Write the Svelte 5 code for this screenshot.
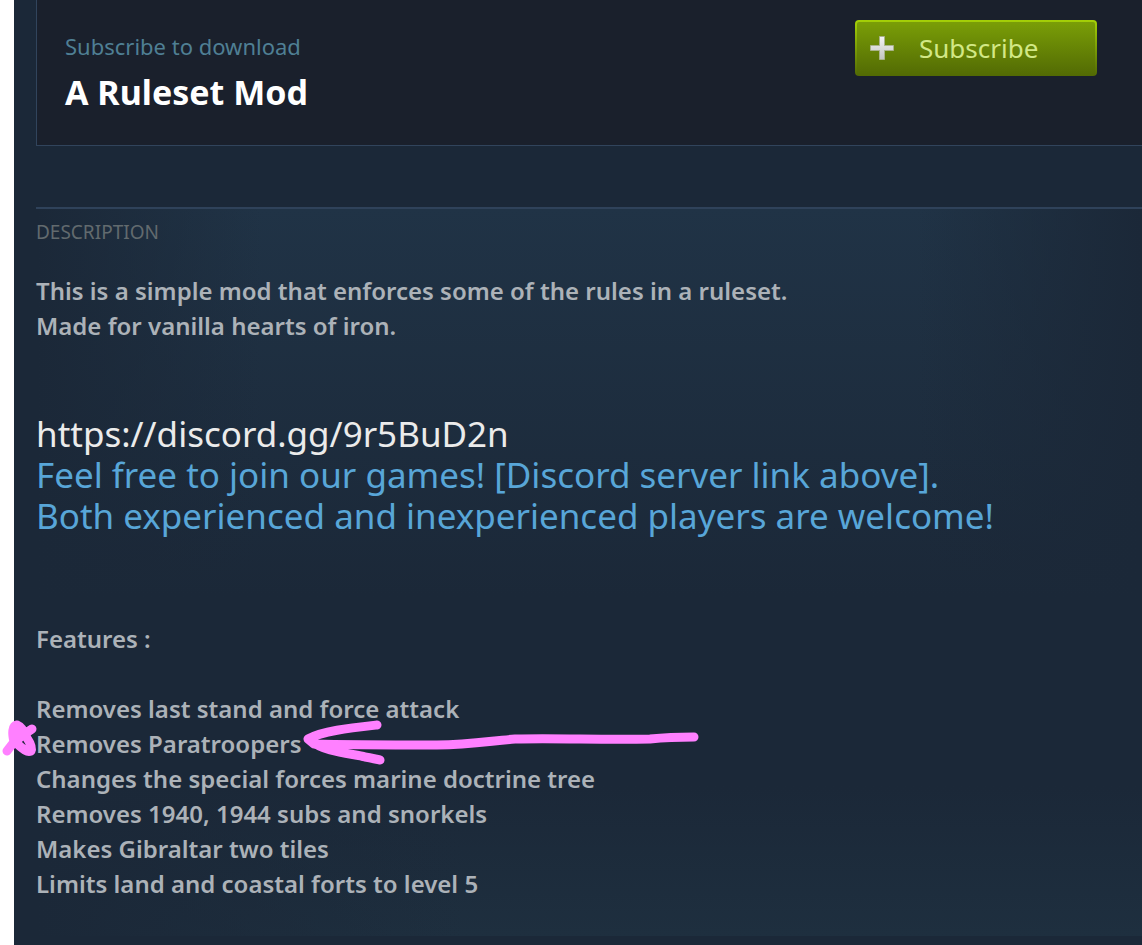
<script>
  const intro = [
    'This is a simple mod that enforces some of the rules in a ruleset.',
    'Made for vanilla hearts of iron.'
  ];
  const invite = [
    'Feel free to join our games! [Discord server link above].',
    'Both experienced and inexperienced players are welcome!'
  ];
  const features = [
    { text: 'Removes last stand and force attack' },
    { text: 'Removes Paratroopers', marked: true },
    { text: 'Changes the special forces marine doctrine tree' },
    { text: 'Removes 1940, 1944 subs and snorkels' },
    { text: 'Makes Gibraltar two tiles' },
    { text: 'Limits land and coastal forts to level 5' }
  ];
  let subscribed = $state(false);
</script>

<main class="page">
  <section class="subscribe">
    <div>
      <p class="hint">Subscribe to download</p>
      <h1>A Ruleset Mod</h1>
    </div>
    <button type="button" class="action" aria-pressed={subscribed} onclick={() => (subscribed = !subscribed)}>
      <svg width="26" height="26" viewBox="0 0 26 26" aria-hidden="true">
        <defs>
          <linearGradient id="plus" x1="0" y1="0" x2="0" y2="1">
            <stop offset="0" stop-color="#f4f4f4" />
            <stop offset="1" stop-color="#c3c4c0" />
          </linearGradient>
        </defs>
        <path d="M10.500 1.500h5v9h9v5h-9v9h-5v-9h-9v-5h9z" fill="url(#plus)" stroke="#a9b38a" stroke-width="1" />
      </svg>
      <span>Subscribe</span>
    </button>
  </section>

  <section class="description">
    <h2>DESCRIPTION</h2>
    <div class="copy">
      {#each intro as line}<p>{line}</p>{/each}
    </div>
    <div class="invite">
      <a href="https://discord.gg/9r5BuD2n">https://discord.gg/9r5BuD2n</a>
      {#each invite as line}<p>{line}</p>{/each}
    </div>
    <div class="copy features">
      <h3>Features :</h3>
      <ul>
        {#each features as item}
          <li class:marked={item.marked}>
            {item.text}
            {#if item.marked}
              <svg class="ink" width="700" height="60" viewBox="0 715 700 60" aria-hidden="true">
                <path d="M7 751L14 742C12 733 12 726 17 725C22 727 25 733 27 738C31 744 32 749 31 751C26 753 21 747 15 742C20 737 25 733 32 729" />
                <path d="M17 729V739L22 735" />
                <path d="M377 725C350 728 322 731 308 739L314 744C348 745 390 745 437 745C470 745 490 741 515 739C560 738 600 740 650 739C670 737 680 737 694 737" />
                <path d="M312 741C323 752 355 754 365 757C371 758 375 759 380 760" />
              </svg>
            {/if}
          </li>
        {/each}
      </ul>
    </div>
  </section>
</main>

<style>
  :global(body) {
    background: #fff;
  }
  .page {
    box-sizing: border-box;
    min-height: 100vh;
    margin-left: 14px;
    padding-left: 22px;
    background: #1b2838;
    font-family: "Noto Sans", sans-serif;
    color: #acb2b8;
  }
  p, h1, h2, h3, ul {
    margin: 0;
    padding: 0;
  }
  .subscribe {
    display: flex;
    justify-content: space-between;
    align-items: flex-start;
    padding: 20px 45px 31px 28px;
    border: solid #31445c;
    border-width: 0 0 1px 1px;
    background: #1a202c;
  }
  .hint {
    padding-top: 10px;
    font-size: 22px;
    line-height: 32px;
    color: #4f7f94;
  }
  h1 {
    padding-top: 9px;
    font-size: 34px;
    line-height: 43px;
    color: #fff;
  }
  .action {
    display: flex;
    align-items: center;
    gap: 24px;
    min-width: 242px;
    height: 56px;
    padding: 0 12px 2px;
    border: 2px solid transparent;
    border-bottom-width: 0;
    border-radius: 4px;
    background:
      linear-gradient(#7a9e07, #526a04) padding-box,
      linear-gradient(#a4d007, #526a04) border-box;
    font: 26px/32px "Noto Sans", sans-serif;
    color: #d2e885;
    cursor: pointer;
  }
  .description {
    margin-top: 61px;
    margin-left: -22px;
    padding: 8px 0 35px 22px;
    background:
      linear-gradient(#2f425a, #2f425a) 22px 0 / 100% 2px no-repeat,
      linear-gradient(90deg, #1b2838 2%, #1b283800 22%, #1b283800 80%, #1b2838 100%) 0 0 / 100% 400px no-repeat,
      linear-gradient(#203346, #1b2838) 0 0 / 100% 390px no-repeat,
      linear-gradient(90deg, #1b2838 2%, #1b283800 40%) 0 100% / 100% 160px no-repeat,
      linear-gradient(#1b2838, #1e2f3f) 0 100% / 100% 150px no-repeat,
      #1b2838;
  }
  h2 {
    font-size: 19px;
    line-height: 34px;
    font-weight: 400;
    color: #626a6e;
  }
  .copy {
    padding-top: 24px;
    font-size: 24px;
    line-height: 35px;
    font-weight: 600;
  }
  .invite {
    padding-top: 70px;
    font-size: 35px;
    line-height: 41px;
    color: #58a6d8;
  }
  .invite a {
    display: block;
    color: #ebebeb;
    text-decoration: none;
  }
  .features {
    padding-top: 85px;
  }
  h3 {
    padding-bottom: 35px;
    font: inherit;
  }
  ul {
    list-style: none;
  }
  .marked {
    position: relative;
  }
  .ink {
    position: absolute;
    top: -11px;
    left: -36px;
    fill: none;
    stroke: #ff80ff;
    stroke-width: 9;
    stroke-linecap: round;
    stroke-linejoin: round;
    pointer-events: none;
  }
</style>
